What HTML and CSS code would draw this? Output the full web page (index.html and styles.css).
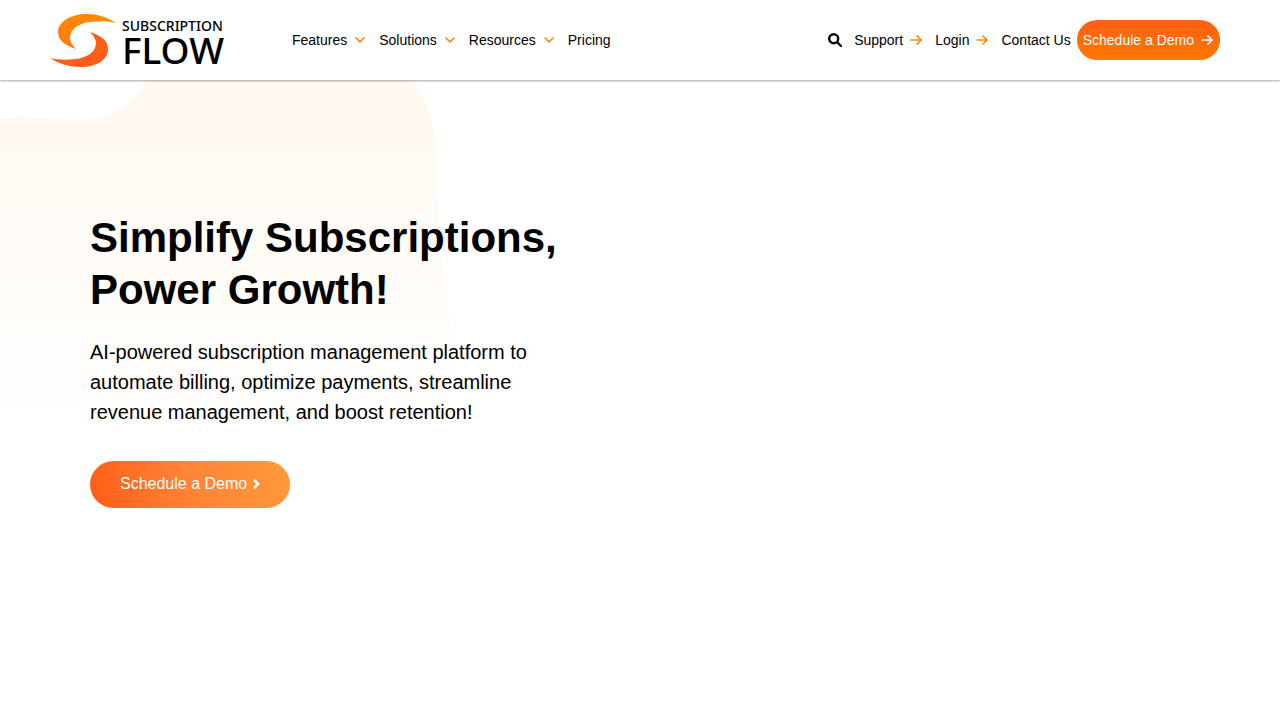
FILE: index.html
```html
<!DOCTYPE html>
<html lang="en">
<head>
    <meta charset="UTF-8">
    <meta name="viewport" content="width=device-width, initial-scale=1.0">
    <title>SubscriptionFlow</title>
    <link rel="stylesheet" href="styles.css">
</head>
<body>
    <header class="header">
        <a href="#" class="logo">
            <svg class="logo-mark" viewBox="0 0 68 56" aria-hidden="true">
                <defs>
                    <linearGradient id="top" x1="0" y1="0" x2="0" y2="1">
                        <stop offset="0" stop-color="#ff8a05"/>
                        <stop offset="1" stop-color="#ff7a10"/>
                    </linearGradient>
                </defs>
                <path fill="url(#top)" d="M66 11C57 5 47 2 37 2C20 2 8 10 8 20C8 28 14 33 26 37C22 33 20 29 20 26C20 17 29 11 40 10C49 9 58 9 66 11Z"/>
                <path fill="#ff5c16" d="M0 46C9 52 20 55 31 55C46 55 58 48 58 37C58 29 52 24 40 20C44 24 46 28 46 31C46 40 37 46 25 47C16 48 8 48 0 46Z"/>
            </svg>
            <span class="logo-text">
                <span class="logo-small">SUBSCRIPTION</span>
                <span class="logo-big">FLOW</span>
            </span>
        </a>

        <nav class="nav">
            <a href="#">Features <svg class="icon" viewBox="0 0 14 14"><path d="M3 5l4 4 4-4"/></svg></a>
            <a href="#">Solutions <svg class="icon" viewBox="0 0 14 14"><path d="M3 5l4 4 4-4"/></svg></a>
            <a href="#">Resources <svg class="icon" viewBox="0 0 14 14"><path d="M3 5l4 4 4-4"/></svg></a>
            <a href="#">Pricing</a>
        </nav>

        <nav class="nav nav-right">
            <a href="#" aria-label="Search">
                <svg class="icon search" viewBox="0 0 14 14"><circle cx="5.7" cy="5.7" r="4.5"/><path d="M9 9l4 4"/></svg>
            </a>
            <a href="#">Support <svg class="icon" viewBox="0 0 14 14"><path d="M2 7h10M8 3l4 4-4 4"/></svg></a>
            <a href="#">Login <svg class="icon" viewBox="0 0 14 14"><path d="M2 7h10M8 3l4 4-4 4"/></svg></a>
            <a href="#">Contact Us</a>
            <a href="#" class="demo">Schedule a Demo <svg class="icon" viewBox="0 0 14 14"><path d="M2 7h10M8 3l4 4-4 4"/></svg></a>
        </nav>
    </header>

    <main class="hero">
        <svg class="blob" viewBox="0 0 460 360" aria-hidden="true">
            <defs>
                <linearGradient id="fade" x1="0" y1="0" x2="0" y2="1">
                    <stop offset="0" stop-color="#fff8f0"/>
                    <stop offset="0.4" stop-color="#fffbf6"/>
                    <stop offset="0.7" stop-color="#fffdfb"/>
                    <stop offset="1" stop-color="#fff"/>
                </linearGradient>
            </defs>
            <path fill="url(#fade)" d="M146 0H414Q437 34 438 100Q438 180 450 240Q458 300 440 360H0V39C25 34 42 40 82 40C114 40 134 22 146 0Z"/>
        </svg>
        <div class="hero-text">
            <h1>Simplify Subscriptions, Power Growth!</h1>
            <p>AI-powered subscription management platform to automate billing, optimize payments, streamline revenue management, and boost retention!</p>
            <a href="#" class="btn">Schedule a Demo <svg class="btn-icon" viewBox="0 0 8 10"><path d="M2 1l4 4-4 4"/></svg></a>
        </div>
    </main>
</body>
</html>
```
FILE: styles.css
```css
* {
    box-sizing: border-box;
}

body {
    margin: 0;
    font-family: "Liberation Sans", Arial, sans-serif;
    color: #000;
    background: #fff;
}

a {
    color: inherit;
    text-decoration: none;
}

/* header */
.header {
    position: relative;
    z-index: 1;
    display: flex;
    align-items: center;
    height: 80px;
    padding: 0 60px 0 50px;
    background: #fff;
    box-shadow: 0 1px 2px rgba(0, 0, 0, 0.35);
}

.logo {
    display: flex;
    gap: 4px;
    width: 236px;
}
.logo-mark {
    width: 68px;
    height: 56px;
}
.logo-text {
    display: flex;
    flex-direction: column;
    padding-top: 4px;
    font-family: "Noto Sans", sans-serif;
    font-weight: 500;
}
.logo-small {
    font-size: 14px;
    line-height: 20px;
}
.logo-big {
    font-size: 37px;
    line-height: 28px;
}

.nav {
    display: flex;
    align-items: center;
    font-size: 14px;
}
.nav a {
    display: flex;
    align-items: center;
    gap: 6px;
    height: 40px;
    padding: 0 6px;
    white-space: nowrap;
}
.nav-right {
    margin-left: auto;
}
.nav .demo {
    border-radius: 20px;
    color: #fff;
    background: linear-gradient(#ff5e14, #ff7a00);
}

.icon {
    width: 14px;
    height: 14px;
    fill: none;
    stroke: #ff8412;
    stroke-width: 1.7;
    stroke-linecap: round;
    stroke-linejoin: round;
}
.icon.search {
    stroke: #000;
    stroke-width: 2.4;
}
.demo .icon {
    stroke: #fff;
}

/* hero */
.hero {
    position: relative;
    padding: 132px 90px;
}
.blob {
    position: absolute;
    top: 0;
    left: 0;
    width: 460px;
    height: 360px;
}
.hero-text {
    position: relative;
    max-width: 480px;
}
.hero h1 {
    margin: 0 0 21px;
    font-size: 42px;
    line-height: 52px;
}
.hero p {
    margin: 0 0 34px;
    font-size: 20px;
    line-height: 30px;
}

.btn {
    display: inline-flex;
    align-items: center;
    gap: 5px;
    height: 47px;
    padding: 0 30px 2px;
    border-radius: 24px;
    color: #fff;
    background: linear-gradient(70deg, #ff5c14, #ff8438 50%, #ff9a38);
}
.btn-icon {
    width: 8px;
    height: 10px;
    fill: none;
    stroke: #fff;
    stroke-width: 2.6;
}
```
